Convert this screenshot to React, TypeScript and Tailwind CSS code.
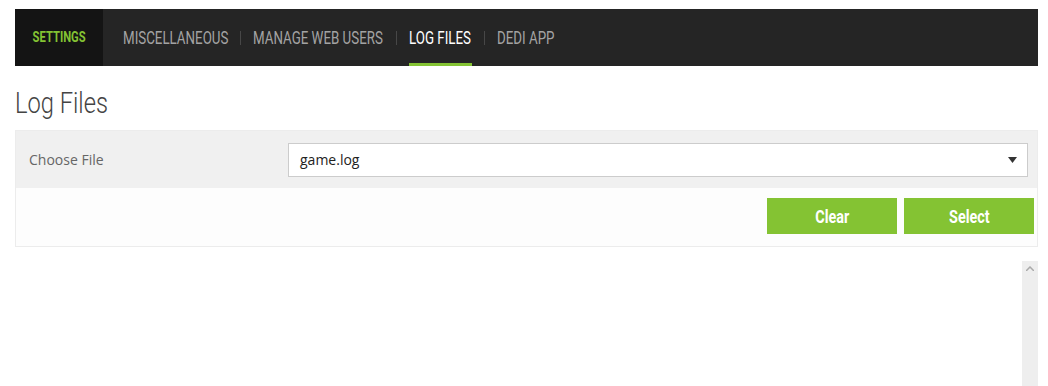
import React from 'react';

const roboto = { fontFamily: 'Roboto, "Liberation Sans", sans-serif' };

const navItems = [
    { label: 'MISCELLANEOUS', w: 'w-[105px]' },
    { label: 'MANAGE WEB USERS', w: 'w-[131px]' },
    { label: 'LOG FILES', w: 'w-[63px]' },
    { label: 'DEDI APP', w: 'w-[57px]' },
];

export default function App() {
    return (
        <div className="w-[1048px] h-[386px] bg-white overflow-hidden pt-[9px] pl-[15px] pr-[10px]" style={roboto}>
            {/* top navigation - the original face is condensed, so Roboto is squeezed */}
            <div className="flex h-[57px] bg-[#252525]">
                <div className="flex items-center justify-center w-[88px] bg-[#141414] text-[#84c333] font-bold text-[14px]">
                    <span className="inline-block whitespace-nowrap scale-x-[0.8] origin-center">SETTINGS</span>
                </div>
                <div className="flex items-stretch pl-[20px]">
                    {navItems.map((item, i) => (
                        <div key={item.label} className="flex items-center">
                            {i > 0 && <span className="w-px h-[14px] bg-[#474747] mx-[12px]" />}
                            <div
                                className={
                                    'relative flex items-center h-full text-[18px] ' +
                                    item.w +
                                    (item.label === 'LOG FILES' ? ' text-white' : ' text-[#a3a3a3]')
                                }
                            >
                                <span className="inline-block whitespace-nowrap scale-x-[0.74] origin-left">
                                    {item.label}
                                </span>
                                {item.label === 'LOG FILES' && (
                                    <span className="absolute left-0 right-0 bottom-0 h-[3px] bg-[#84c333]" />
                                )}
                            </div>
                        </div>
                    ))}
                </div>
            </div>

            <h1 className="mt-[21px] text-[30px] leading-[32px] text-[#444] font-light">
                <span className="inline-block whitespace-nowrap scale-x-[0.79] origin-left">Log Files</span>
            </h1>

            {/* file picker panel */}
            <div className="mt-[11px] border border-[#ececec]" style={{ fontFamily: '"Open Sans", sans-serif' }}>
                <div className="flex items-center h-[57px] bg-[#f0f0f0] pl-[13px] pr-[9px]">
                    <label className="w-[259px] text-[14px] text-[#666]">Choose File</label>
                    <div className="flex-1 flex items-center justify-between h-[34px] bg-white border border-[#ccc] pl-[11px] pr-[10px]">
                        <span className="text-[14px] text-[#222]">game.log</span>
                        <svg width="9" height="6" viewBox="0 0 9 6">
                            <path d="M0 0h9L4.5 6z" fill="#333" />
                        </svg>
                    </div>
                </div>
                <div className="flex justify-end gap-[7px] h-[58px] bg-[#fdfdfd] pt-[10px] pr-[3px]" style={roboto}>
                    <button className="w-[130px] h-[36px] bg-[#84c333] text-white font-bold text-[18px]">
                        <span className="inline-block whitespace-nowrap scale-x-[0.8] origin-center">Clear</span>
                    </button>
                    <button className="w-[130px] h-[36px] bg-[#84c333] text-white font-bold text-[18px]">
                        <span className="inline-block whitespace-nowrap scale-x-[0.8] origin-center">Select</span>
                    </button>
                </div>
            </div>

            {/* log output area */}
            <div className="flex justify-end mt-[14px]">
                <div className="w-[16px] h-[130px] bg-[#eeeeee] flex justify-center pt-[5px]">
                    <svg width="8" height="5" viewBox="0 0 8 5">
                        <path d="M0 5L4 1L8 5" stroke="#aaa" strokeWidth="1.5" fill="none" />
                    </svg>
                </div>
            </div>
        </div>
    );
}
